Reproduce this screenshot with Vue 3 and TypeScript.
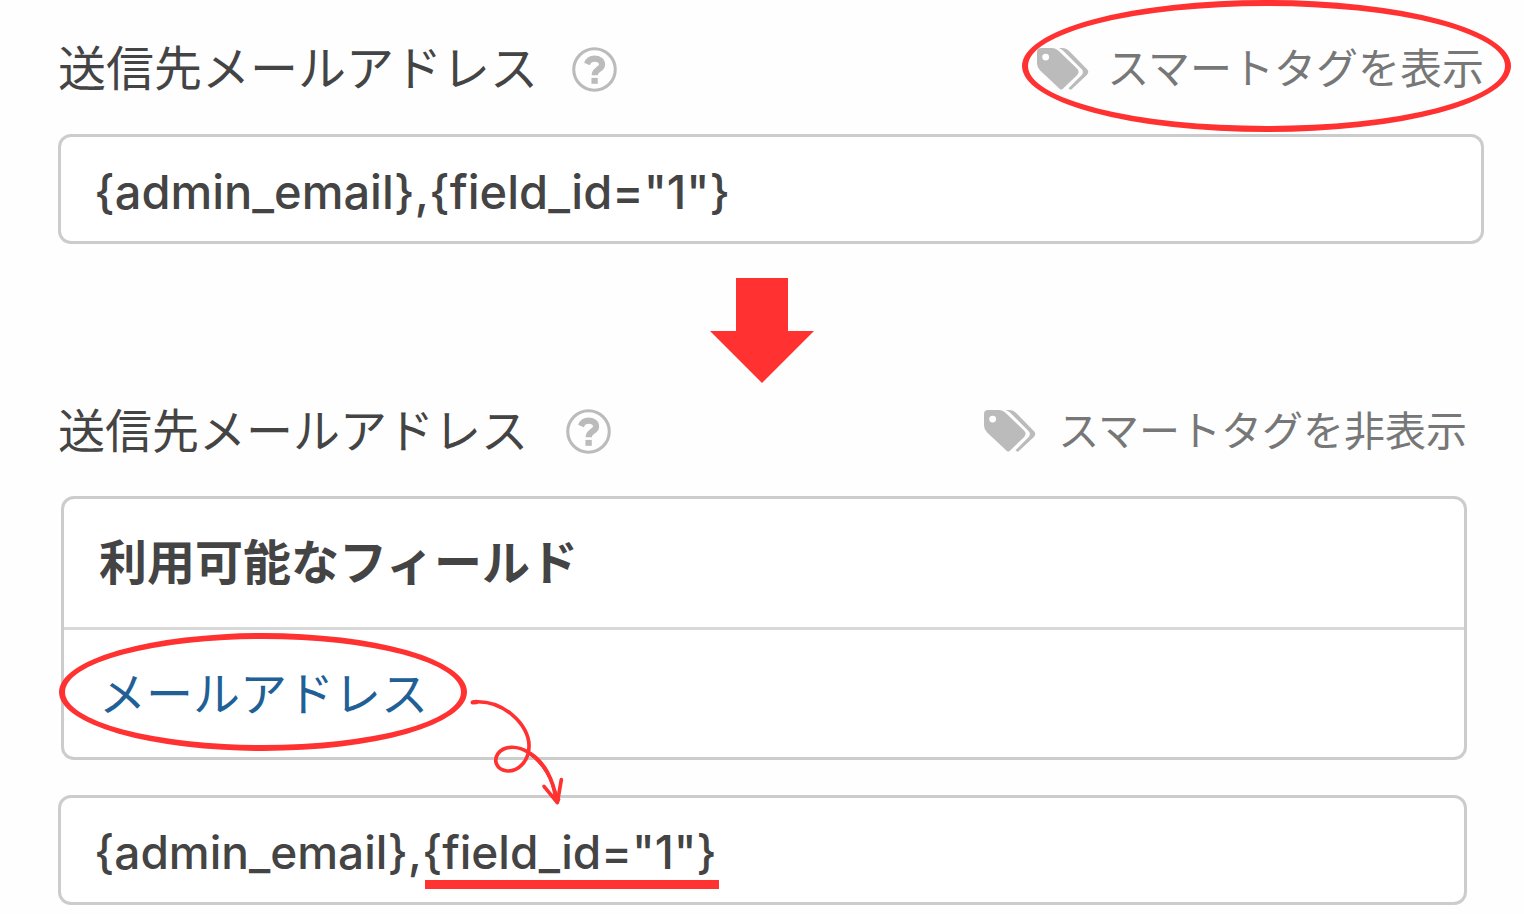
<script setup lang="ts">
import { ref } from 'vue'

const recipient = ref<string>('{admin_email},{field_id="1"}')
const recipientWithTag = ref<string>('{admin_email},{field_id="1"}')
const availableFields: string[] = ['メールアドレス']
</script>

<template>
  <main class="page">
    <section class="setting setting-closed">
      <div class="row">
        <div class="title">
          <label for="recipient-a">送信先メールアドレス</label>
          <button class="help" type="button" aria-label="ヘルプ">
            <svg viewBox="0 0 44 44" aria-hidden="true">
              <circle cx="22" cy="22" r="20.3" />
              <path d="M14.6 16.6C16 13.2 18.6 11.4 22 11.4C26.4 11.4 29.4 13.6 29.4 17C29.4 22 22.2 21.8 22.2 27.6" />
              <rect x="19" y="30.2" width="6.2" height="5.8" />
            </svg>
          </button>
        </div>
        <button class="toggle" type="button">
          <svg class="tags" viewBox="0 0 150 125" preserveAspectRatio="none" aria-hidden="true">
            <path fill-rule="evenodd" d="M12 0H42Q56 1 65 11L116 62Q124 71 116 80L77 119Q70 128 63 119L9 67Q0 57 0 46V12Q0 0 12 0ZM25 17A10 10 0 1 0 25 37A10 10 0 1 0 25 17Z" />
            <path d="M63 0H72Q86 1 95 11L143 62Q153 71 143 81L103 120Q97 128 91 120L129 80Q136 71 129 63L80 13Q73 4 63 0Z" />
          </svg>
          <span>スマートタグを表示</span>
          <span class="ring ring-toggle" aria-hidden="true"></span>
        </button>
      </div>
      <input id="recipient-a" v-model="recipient" class="field" type="text" />
    </section>

    <svg class="down" viewBox="0 0 104 105" aria-hidden="true">
      <path d="M26 0H78V53H104L52 105L0 53H26Z" />
    </svg>

    <section class="setting setting-open">
      <div class="row">
        <div class="title">
          <label for="recipient-b">送信先メールアドレス</label>
          <button class="help" type="button" aria-label="ヘルプ">
            <svg viewBox="0 0 44 44" aria-hidden="true">
              <circle cx="22" cy="22" r="20.3" />
              <path d="M14.6 16.6C16 13.2 18.6 11.4 22 11.4C26.4 11.4 29.4 13.6 29.4 17C29.4 22 22.2 21.8 22.2 27.6" />
              <rect x="19" y="30.2" width="6.2" height="5.8" />
            </svg>
          </button>
        </div>
        <button class="toggle" type="button">
          <svg class="tags" viewBox="0 0 150 125" preserveAspectRatio="none" aria-hidden="true">
            <path fill-rule="evenodd" d="M12 0H42Q56 1 65 11L116 62Q124 71 116 80L77 119Q70 128 63 119L9 67Q0 57 0 46V12Q0 0 12 0ZM25 17A10 10 0 1 0 25 37A10 10 0 1 0 25 17Z" />
            <path d="M63 0H72Q86 1 95 11L143 62Q153 71 143 81L103 120Q97 128 91 120L129 80Q136 71 129 63L80 13Q73 4 63 0Z" />
          </svg>
          <span>スマートタグを非表示</span>
        </button>
      </div>

      <div class="panel">
        <h2>利用可能なフィールド</h2>
        <ul>
          <li v-for="name in availableFields" :key="name">
            <a href="#">{{ name }}</a>
          </li>
        </ul>
        <span class="ring ring-link" aria-hidden="true"></span>
        <svg class="squiggle" viewBox="0 0 390 420" aria-hidden="true">
          <path class="start" d="M68 67L80 66" />
          <path class="curve" d="M70 66C158 58 240 134 237 200C236 244 205 274 172 273C138 270 130 240 144 221C164 194 206 198 237 218C286 248 308 296 322 366" />
          <path class="tail" d="M237 215C280 241 304 284 313 324L330 358L322 372L312 350C306 300 280 255 235 222Z" />
          <path class="head" d="M282 319L322 368L334 299" />
        </svg>
      </div>

      <div class="field-wrap">
        <input id="recipient-b" v-model="recipientWithTag" class="field" type="text" />
        <span class="underline" aria-hidden="true"></span>
      </div>
    </section>
  </main>
</template>

<style>
body {
  margin: 0;
  background: #fefefe;
}
</style>

<style scoped>
.page {
  display: flex;
  flex-direction: column;
  padding: 32px 0 8px 58px;
  color: #444;
  font-family: Inter, "Noto Sans CJK JP", sans-serif;
}

.setting-closed {
  padding-right: 40px;
  font-size: 48px;
}

.setting-open {
  padding-right: 57px;
  font-size: 47px;
}

.row {
  display: flex;
  align-items: center;
  justify-content: space-between;
  height: 74px;
  margin-bottom: 28px;
}

.title {
  display: flex;
  align-items: center;
  gap: 34px;
}

.setting-open .title {
  gap: 38px;
}

.title label {
  line-height: 74px;
}

button {
  padding: 0;
  border: 0;
  background: none;
  font-family: inherit;
  cursor: pointer;
}

.help {
  width: 45px;
  height: 45px;
}

.help svg {
  display: block;
  width: 100%;
  height: 100%;
  fill: none;
  stroke: #bbb;
}

.help circle {
  stroke-width: 3;
}

.help path {
  stroke-width: 6;
}

.help rect {
  fill: #bbb;
  stroke: none;
}

.toggle {
  position: relative;
  display: flex;
  align-items: center;
  gap: 22px;
  color: #777;
  font-size: 41px;
  line-height: 74px;
  white-space: nowrap;
}

.setting-closed .toggle {
  gap: 18px;
  font-size: 42px;
}

.tags {
  width: 52px;
  height: 42px;
  fill: #bbb;
}

.ring {
  position: absolute;
  box-sizing: border-box;
  border: 6px solid #ff3131;
  border-radius: 50%;
  pointer-events: none;
}

.ring-toggle {
  top: -32px;
  right: -27px;
  bottom: -26px;
  left: -15px;
}

.field {
  display: block;
  box-sizing: border-box;
  width: 100%;
  height: 110px;
  padding: 4px 33px 0;
  border: 3px solid #ccc;
  border-radius: 13px;
  outline: none;
  background: #fff;
  color: #444;
  font-family: Inter, sans-serif;
  font-size: 47px;
  font-weight: 500;
}

.setting-open .field {
  font-size: 46px;
}

.down {
  align-self: center;
  width: 104px;
  height: 105px;
  margin: 34px 58px 11px 0;
  fill: #ff3131;
}

.panel {
  position: relative;
  margin: 0 0 35px 3px;
  border: 3px solid #ccc;
  border-radius: 13px;
  background: #fff;
}

h2 {
  margin: 0;
  padding: 0 35px;
  border-bottom: 3px solid #d9d9d9;
  font-size: 48px;
  font-weight: 700;
  line-height: 128px;
}

ul {
  margin: 0;
  padding: 0 35px;
  list-style: none;
}

li {
  line-height: 127px;
}

a {
  color: #215f97;
  text-decoration: none;
}

.ring-link {
  top: 134px;
  left: -5px;
  width: 408px;
  height: 118px;
}

.squiggle {
  position: absolute;
  top: 181px;
  left: 386px;
  z-index: 1;
  width: 130px;
  height: 140px;
  fill: none;
  stroke: #ff3131;
  stroke-linejoin: round;
  pointer-events: none;
}

.curve {
  stroke-width: 11;
}

.start {
  stroke-width: 13;
  stroke-linecap: round;
}

.tail {
  fill: #ff3131;
  stroke-width: 3;
}

.head {
  stroke-width: 11;
  stroke-linecap: round;
}

.field-wrap {
  position: relative;
}

.underline {
  position: absolute;
  top: 85px;
  left: 367px;
  width: 294px;
  height: 9px;
  background: #ff3131;
}
</style>
